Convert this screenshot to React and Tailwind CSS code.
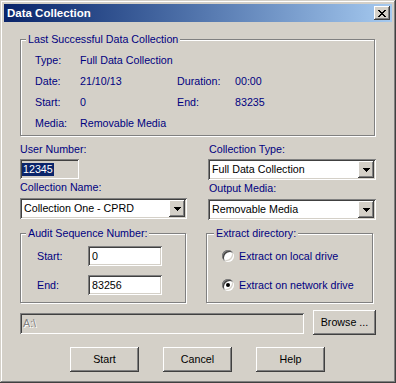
import React from 'react';

const raised =
  'bg-[#d4d0c8] shadow-[inset_-1px_-1px_#404040,inset_1px_1px_#fff,inset_-2px_-2px_#808080,inset_2px_2px_#d4d0c8]';
const sunken =
  'shadow-[inset_1px_1px_#808080,inset_-1px_-1px_#fff,inset_2px_2px_#404040,inset_-2px_-2px_#d4d0c8]';
const etched = 'relative border border-[#808080] shadow-[1px_1px_#fff,inset_1px_1px_#fff]';

const Arrow = () => (
  <svg width="7" height="4" viewBox="0 0 7 4" shapeRendering="crispEdges">
    <path d="M0 0h7v1H0zM1 1h5v1H1zM2 2h3v1H2zM3 3h1v1H3z" fill="#000" />
  </svg>
);

const Combo = ({ value }) => (
  <div className={`h-[21px] w-full bg-white flex items-center p-[2px] ${sunken}`}>
    <span className="flex-1 pl-[2px] text-black">{value}</span>
    <div className={`w-[16px] h-full flex items-center justify-center ${raised}`}>
      <Arrow />
    </div>
  </div>
);

const Field = ({ value, className = '' }) => (
  <div className={`h-[20px] bg-white flex items-center pl-[4px] text-black ${sunken} ${className}`}>{value}</div>
);

const Radio = ({ checked }) => (
  <div
    className={`w-[12px] h-[12px] rounded-full bg-white flex items-center justify-center shrink-0 ${sunken}`}
  >
    {checked && <div className="w-[4px] h-[4px] rounded-full bg-black" />}
  </div>
);

const Button = ({ children, className = '' }) => (
  <button className={`h-[25px] flex items-center justify-center text-black ${raised} ${className}`}>
    {children}
  </button>
);

const Label = ({ children, left }) => (
  <span className={`absolute -top-[7px] px-[2px] leading-[13px] bg-[#d4d0c8] ${left}`}>{children}</span>
);

export default function App() {
  return (
    <div
      className="w-[396px] h-[383px] bg-[#d4d0c8] p-[4px] flex flex-col text-[10.7px] leading-[13px] text-[#000080] font-['Liberation_Sans',Arial,sans-serif] shadow-[inset_-1px_-1px_#404040,inset_1px_1px_#d4d0c8,inset_-2px_-2px_#808080,inset_2px_2px_#fff]"
    >
      {/* Title bar */}
      <div className="h-[18px] flex items-center pl-[3px] pr-[2px] bg-linear-to-r from-[#0a246a] to-[#a6caf0]">
        <span className="text-white font-bold text-[11.5px]">Data Collection</span>
        <div className={`ml-auto w-[16px] h-[14px] flex items-center justify-center ${raised}`}>
          <svg width="8" height="7" viewBox="0 0 8 7" shapeRendering="crispEdges">
            <path
              d="M0 0h2v1H0zM6 0h2v1H6zM1 1h2v1H1zM5 1h2v1H5zM2 2h4v1H2zM3 3h2v1H3zM2 4h4v1H2zM1 5h2v1H1zM5 5h2v1H5zM0 6h2v1H0zM6 6h2v1H6z"
              fill="#000"
            />
          </svg>
        </div>
      </div>

      <div className="flex-1 flex flex-col px-[16px]">
        {/* Last successful collection */}
        <div className={`mt-[17px] w-[355px] h-[97px] ${etched}`}>
          <Label left="left-[5px]">Last Successful Data Collection</Label>
          <div className="pt-[10px] pl-[14px] flex flex-col">
            <div className="h-[21px] flex items-center">
              <span className="w-[45px]">Type:</span>
              <span>Full Data Collection</span>
            </div>
            <div className="h-[21px] flex items-center">
              <span className="w-[45px]">Date:</span>
              <span className="w-[97px]">21/10/13</span>
              <span className="w-[58px]">Duration:</span>
              <span>00:00</span>
            </div>
            <div className="h-[21px] flex items-center">
              <span className="w-[45px]">Start:</span>
              <span className="w-[97px]">0</span>
              <span className="w-[58px]">End:</span>
              <span>83235</span>
            </div>
            <div className="h-[21px] flex items-center">
              <span className="w-[45px]">Media:</span>
              <span>Removable Media</span>
            </div>
          </div>
        </div>

        {/* Middle fields */}
        <div className="mt-[7px] flex justify-between">
          <div className="w-[167px] flex flex-col">
            <span>User Number:</span>
            <div className={`mt-[3px] w-[59px] h-[20px] flex items-center pl-[2px] ${sunken}`}>
              <span className="bg-[#0a246a] text-white px-[1px]">12345</span>
            </div>
            <span className="mt-[2px]">Collection Name:</span>
            <div className="mt-[4px]">
              <Combo value="Collection One - CPRD" />
            </div>
          </div>
          <div className="w-[168px] flex flex-col pl-[1px]">
            <span>Collection Type:</span>
            <div className="mt-[3px] -ml-[1px]">
              <Combo value="Full Data Collection" />
            </div>
            <span className="mt-[2px]">Output Media:</span>
            <div className="mt-[4px] -ml-[1px]">
              <Combo value="Removable Media" />
            </div>
          </div>
        </div>

        {/* Groups */}
        <div className="mt-[13px] flex gap-[20px]">
          <div className={`w-[166px] h-[70px] ${etched}`}>
            <Label left="left-[5px]">Audit Sequence Number:</Label>
            <div className="pt-[12px] pl-[16px] flex flex-col gap-[9px]">
              <div className="h-[20px] flex items-center">
                <span className="w-[51px]">Start:</span>
                <Field value="0" className="w-[74px]" />
              </div>
              <div className="h-[20px] flex items-center">
                <span className="w-[51px]">End:</span>
                <Field value="83256" className="w-[74px]" />
              </div>
            </div>
          </div>
          <div className={`w-[167px] h-[70px] ${etched}`}>
            <Label left="left-[7px]">Extract directory:</Label>
            <div className="pt-[12px] pl-[15px] flex flex-col gap-[9px]">
              <div className="h-[20px] flex items-center gap-[5px]">
                <Radio />
                <span>Extract on local drive</span>
              </div>
              <div className="h-[20px] flex items-center gap-[5px]">
                <Radio checked />
                <span>Extract on network drive</span>
              </div>
            </div>
          </div>
        </div>

        {/* Path */}
        <div className="mt-[7px] flex items-start justify-between">
          <div
            className={`mt-[3px] w-[284px] h-[21px] flex items-center pl-[3px] text-[#808080] [text-shadow:1px_1px_#fff] ${sunken}`}
          >
            A:\
          </div>
          <Button className="w-[63px]">Browse ...</Button>
        </div>

        {/* Buttons */}
        <div className="mt-[12px] ml-[50px] flex gap-[24px]">
          <Button className="w-[69px]">Start</Button>
          <Button className="w-[69px]">Cancel</Button>
          <Button className="w-[69px]">Help</Button>
        </div>
      </div>
    </div>
  );
}
